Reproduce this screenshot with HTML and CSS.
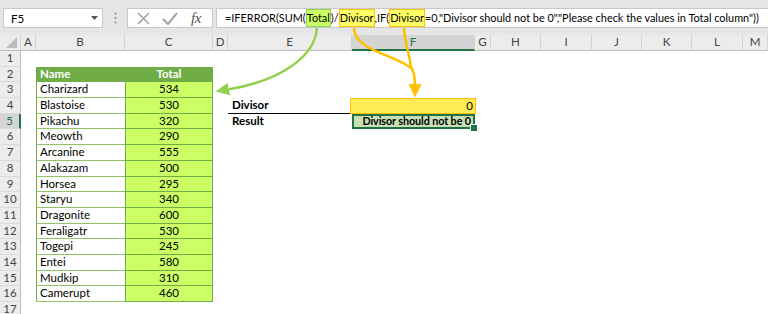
FILE: index.html
```html
<!DOCTYPE html>
<html lang="en">
<head>
    <meta charset="UTF-8">
    <title>IFERROR with divisor check</title>
    <link rel="stylesheet" href="styles.css">
</head>
<body>
    <div class="app">
        <!-- formula bar -->
        <div class="formula-bar">
            <div class="name-box">
                <span>F5</span>
                <svg width="7" height="4" viewBox="0 0 7 4"><path d="M0 0h7L3.5 4z" fill="#555"/></svg>
            </div>
            <div class="grip">
                <svg width="3" height="12" viewBox="0 0 3 12"><circle cx="1.5" cy="1.5" r="1" fill="#8a8a8a"/><circle cx="1.5" cy="6" r="1" fill="#8a8a8a"/><circle cx="1.5" cy="10.5" r="1" fill="#8a8a8a"/></svg>
            </div>
            <div class="fx-box">
                <svg class="ico-x" width="13" height="13" viewBox="0 0 13 13"><path d="M1 1L12 12M12 1L1 12" stroke="#a3a3a3" stroke-width="1.6" fill="none"/></svg>
                <svg class="ico-ok" width="16" height="13" viewBox="0 0 16 13"><path d="M1 7L6 12L15 1" stroke="#a3a3a3" stroke-width="2" fill="none"/></svg>
                <span class="fx">fx</span>
            </div>
            <div class="formula">=IFERROR(SUM(<span class="ref ref-total">Total</span>)/<span class="ref ref-div">Divisor</span>,IF(<span class="ref ref-div">Divisor</span>=0,"Divisor should not be 0","Please check the values in Total column"))</div>
        </div>

        <!-- sheet -->
        <div class="sheet">
            <div class="row head">
                <div class="corner"></div>
                <div class="ch">A</div>
                <div class="ch">B</div>
                <div class="ch">C</div>
                <div class="ch">D</div>
                <div class="ch">E</div>
                <div class="ch active">F</div>
                <div class="ch">G</div>
                <div class="ch">H</div>
                <div class="ch">I</div>
                <div class="ch">J</div>
                <div class="ch">K</div>
                <div class="ch">L</div>
                <div class="ch">M</div>
            </div>

            <div class="row"><div class="rh">1</div></div>
            <div class="row">
                <div class="rh">2</div>
                <div class="cb th">Name</div>
                <div class="cc th">Total</div>
            </div>
            <div class="row"><div class="rh">3</div><div class="cb">Charizard</div><div class="cc">534</div></div>
            <div class="row">
                <div class="rh">4</div><div class="cb">Blastoise</div><div class="cc">530</div>
                <div class="ce label underline">Divisor</div>
                <div class="cf divisor">0</div>
            </div>
            <div class="row">
                <div class="rh active">5</div><div class="cb">Pikachu</div><div class="cc">320</div>
                <div class="ce label">Result</div>
                <div class="cf result">Divisor should not be 0</div>
            </div>
            <div class="row"><div class="rh">6</div><div class="cb">Meowth</div><div class="cc">290</div></div>
            <div class="row"><div class="rh">7</div><div class="cb">Arcanine</div><div class="cc">555</div></div>
            <div class="row"><div class="rh">8</div><div class="cb">Alakazam</div><div class="cc">500</div></div>
            <div class="row"><div class="rh">9</div><div class="cb">Horsea</div><div class="cc">295</div></div>
            <div class="row"><div class="rh">10</div><div class="cb">Staryu</div><div class="cc">340</div></div>
            <div class="row"><div class="rh">11</div><div class="cb">Dragonite</div><div class="cc">600</div></div>
            <div class="row"><div class="rh">12</div><div class="cb">Feraligatr</div><div class="cc">530</div></div>
            <div class="row"><div class="rh">13</div><div class="cb">Togepi</div><div class="cc">245</div></div>
            <div class="row"><div class="rh">14</div><div class="cb">Entei</div><div class="cc">580</div></div>
            <div class="row"><div class="rh">15</div><div class="cb">Mudkip</div><div class="cc">310</div></div>
            <div class="row"><div class="rh">16</div><div class="cb">Camerupt</div><div class="cc">460</div></div>
            <div class="row"><div class="rh">17</div></div>
        </div>

        <!-- callout arrows drawn over the sheet -->
        <svg class="arrows" width="768" height="314" viewBox="0 0 768 314">
            <path d="M317 28 C315 56 282 80 229 89.3" stroke="#92d050" stroke-width="2.5" fill="none"/>
            <polygon points="215.5,91.5 227.6,83 230,95.2" fill="#92d050"/>
            <path d="M354 28 C354 50 395 55 411 68" stroke="#ffc000" stroke-width="2.5" fill="none"/>
            <path d="M404 28 C405 45 410 55 411 68" stroke="#ffc000" stroke-width="2.5" fill="none"/>
            <path d="M411 67 C414 72 415 78 415 85" stroke="#ffc000" stroke-width="2.5" fill="none"/>
            <polygon points="415,97.5 408.5,84 421.5,84" fill="#ffc000"/>
        </svg>
    </div>
</body>
</html>
```

FILE: styles.css
```css
* {
    box-sizing: border-box;
}
body {
    margin: 0;
    background: #fff;
    font-family: Lato, "Liberation Sans", sans-serif;
    font-size: 11px;
    color: #000;
}
.app {
    position: relative;
    width: 768px;
    height: 314px;
    overflow: hidden;
}

/* formula bar */
.formula-bar {
    height: 35px;
    background: #e6e6e6;
    display: flex;
    align-items: flex-start;
    padding: 8px 0 0 3px;
}
.name-box {
    width: 100px;
    height: 20px;
    background: #fff;
    border: 1px solid #c8c8c8;
    display: flex;
    align-items: center;
    justify-content: space-between;
    padding: 0 4px 0 7px;
    font-size: 11.5px;
}
.grip {
    width: 24px;
    height: 20px;
    display: flex;
    align-items: center;
    justify-content: center;
}
.fx-box {
    width: 86px;
    height: 20px;
    background: #fff;
    border: 1px solid #c8c8c8;
    display: flex;
    align-items: center;
    padding-left: 9px;
}
.ico-x {
    margin-right: 12px;
}
.ico-ok {
    margin-right: 13px;
}
.fx {
    font-family: "Liberation Serif", serif;
    font-style: italic;
    font-size: 15px;
    color: #555;
    letter-spacing: -0.5px;
}
.formula {
    flex: 1;
    height: 20px;
    margin-left: 3px;
    background: #fff;
    border: 1px solid #c8c8c8;
    border-right: none;
    padding-left: 8px;
    line-height: 18px;
    font-size: 10.9px;
    white-space: nowrap;
    overflow: hidden;
}
.ref {
    padding: 1px 0 2px;
    border: 1px solid;
}
.ref-total {
    background: #ccff66;
    border-color: #92d050;
}
.ref-div {
    background: #ffff66;
    border-color: #ffc000;
}

/* sheet grid */
.row {
    display: grid;
    grid-template-columns: 21px 15px 89px 88px 15px 124px 123px 16px 50px 51px 50px 50px 51px 25px;
    grid-template-rows: 100%;
    height: 15.7px;
    line-height: 14.5px;
    white-space: nowrap;
}
.row.head {
    height: 16px;
}
.corner {
    background: #ececec;
    border-right: 1px solid #d4d4d4;
    border-bottom: 1px solid #bcbcbc;
    position: relative;
}
.corner::after {
    content: '';
    position: absolute;
    right: 3px;
    bottom: 2px;
    border-left: 11px solid transparent;
    border-bottom: 11px solid #bcbcbc;
}
.ch {
    background: #ececec;
    border-right: 1px solid #d4d4d4;
    border-bottom: 1px solid #bcbcbc;
    text-align: center;
    color: #444;
    font-size: 11.5px;
}
.ch.active {
    background: #d4d4d4;
    color: #217346;
    border-bottom: 2px solid #217346;
}
.rh {
    grid-column: 1;
    background: #ececec;
    border-right: 1px solid #bcbcbc;
    border-bottom: 1px solid #dadada;
    text-align: center;
    color: #444;
    font-size: 11.5px;
}
.rh.active {
    background: #d4d4d4;
    color: #217346;
    border-right: 2px solid #217346;
}

/* table B2:C16 */
.cb {
    grid-column: 3;
    padding-left: 3px;
    border-left: 1px solid #70ad47;
    border-bottom: 1px solid #8fc46a;
    font-size: 11.5px;
}
.cc {
    grid-column: 4;
    text-align: center;
    background: #ccff66;
    border-left: 1px solid #70ad47;
    border-right: 1px solid #70ad47;
    border-bottom: 1px solid #70ad47;
    font-size: 11.5px;
}
.th {
    background: #70ad47;
    color: #fff;
    font-weight: 700;
    border-color: #70ad47;
}

/* divisor / result */
.ce {
    grid-column: 6;
    padding-left: 4px;
    font-size: 11.5px;
}
.label {
    font-weight: 700;
}
.underline {
    border-bottom: 1px solid #000;
}
.cf {
    grid-column: 7;
    display: flex;
    justify-content: flex-end;
    align-items: center;
    padding-right: 2px;
}
.divisor {
    background: #ffeb55;
    border: 1px solid #ffc000;
    margin: 0 -1px 0 -2px;
    font-size: 11.5px;
}
.result {
    position: relative;
    background: #c6e0b4;
    border: 2px solid #217346;
    font-weight: 700;
    font-size: 10.8px;
    letter-spacing: -0.1px;
}
.result::after {
    content: '';
    position: absolute;
    right: -5px;
    bottom: -5px;
    width: 6px;
    height: 6px;
    background: #217346;
    border: 1px solid #fff;
}

.arrows {
    position: absolute;
    left: 0;
    top: 0;
    pointer-events: none;
}
```
